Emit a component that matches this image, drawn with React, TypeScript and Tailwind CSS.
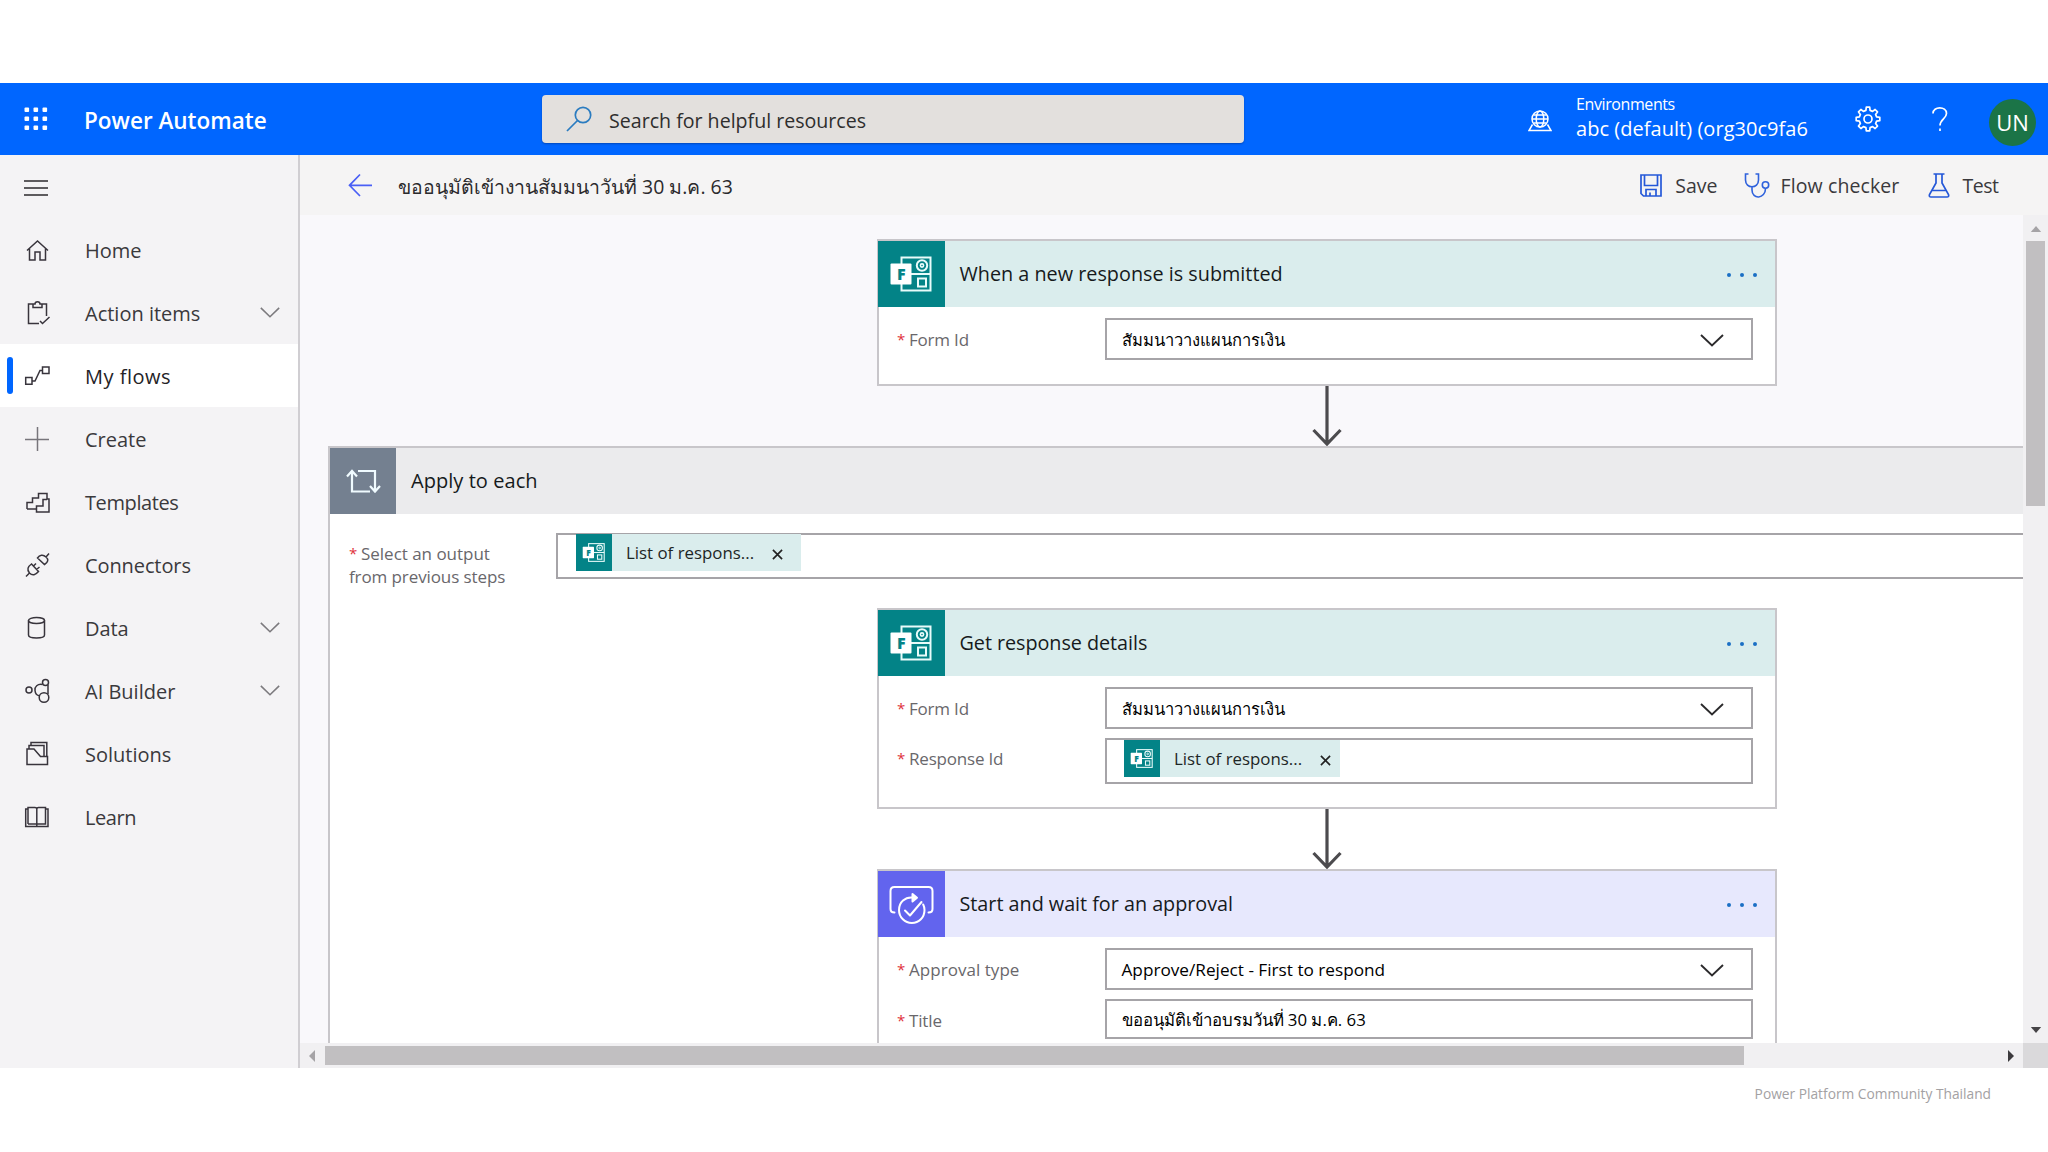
import React from "react";
import type { ReactNode } from "react";

const FONT = "font-['Open_Sans','Noto_Sans',sans-serif]";

type NavItem = { label: string; tracking: string; icon: ReactNode; expandable?: boolean; active?: boolean };

const NAV: NavItem[] = [
  {
    label: "Home",
    tracking: "tracking-normal",
    icon: <path d="M4 14.5 14.5 5 25 14.5M6.5 12.5V24H12V16H17V24H22.5V12.5" />,
  },
  {
    label: "Action items",
    tracking: "tracking-normal",
    expandable: true,
    icon: (
      <>
        <path d="M10 5H5.5V24.5H16M19 5H23.5V17M10 8.500H19V5H17C17 2 12 2 12 5H10Z" />
        <path d="M17 22 19.500 24.500 26.500 18" />
      </>
    ),
  },
  {
    label: "My flows",
    tracking: "tracking-[0.5px]",
    active: true,
    icon: <path d="M2.700 15.500H9V22.300H2.700ZM19.500 5H26V11.500H19.500ZM9 19H12L17 8.500H19.500" />,
  },
  { label: "Create", tracking: "tracking-normal", icon: <path d="M14.500 2V26M2 14.500H26" className="stroke-[#77757b]" /> },
  {
    label: "Templates",
    tracking: "tracking-[-0.4px]",
    icon: <path d="M4 21V14.500H9.500V10H15.500V5.500H24V11H26V24H13.500V18H20V11.500H24M4 21H13.500" />,
  },
  {
    label: "Connectors",
    tracking: "tracking-[-0.1px]",
    icon: (
      <>
        <path d="M3 25.500 6.500 22M6.500 22C3.500 18.500 5 15.500 8.500 13L15.500 20.500C12.500 24 9.500 25 6.500 22ZM10.500 15 13 12.500M13.500 18.500 16.500 16" />
        <path d="M26 2.500 23 6M23 6C20 3 16.500 4 14.500 7L21.500 13.500C25 11.500 26 8.500 23 6Z" />
      </>
    ),
  },
  {
    label: "Data",
    tracking: "tracking-[-0.1px]",
    expandable: true,
    icon: (
      <>
        <ellipse cx="13.500" cy="6.500" rx="8" ry="3" />
        <path d="M5.500 6.500V21C5.500 25 21.500 25 21.500 21V6.500" />
      </>
    ),
  },
  {
    label: "AI Builder",
    tracking: "tracking-normal",
    expandable: true,
    icon: (
      <>
        <circle cx="6" cy="13" r="3" />
        <circle cx="22.500" cy="5.500" r="3" />
        <circle cx="21" cy="20.500" r="4.800" />
        <path d="M19.500 7.500C14.500 6.500 11.500 10 12 13.500C12.300 17 14.500 18.500 16.500 18.800M25 8V17" />
      </>
    ),
  },
  {
    label: "Solutions",
    tracking: "tracking-normal",
    icon: <path d="M4 24.500V9H11L17.500 16.500H24.500V24.500ZM6 9V5.500H21V16M8 5.500V2.500H23.800V16.500" />,
  },
  {
    label: "Learn",
    tracking: "tracking-[-0.4px]",
    icon: <path d="M5 6H2.700V23.500H25V6H22.500M5 21V4.500H12C13 4.500 13.800 5 13.800 6C13.800 5 14.500 4.500 15.500 4.500H22.500V21H5M13.800 6V23.500" />,
  },
];

function Chevron({ className }: { className: string }) {
  return (
    <svg viewBox="0 0 24 13" className={className} fill="none" preserveAspectRatio="none">
      <path d="M1 1 12 11.500 23 1" stroke="currentColor" strokeWidth="1.900" />
    </svg>
  );
}

function Header() {
  return (
    <header className="flex h-[72px] shrink-0 items-center bg-[#0066ff] text-white">
      <svg viewBox="0 0 24 24" className="ml-6 h-6 w-6 shrink-0" fill="currentColor">
        {[0, 9, 18].map((y) => [0, 9, 18].map((x) => <rect key={`${x}-${y}`} x={x + 0.5} y={y + 0.5} width="4.600" height="4.600" rx="1" />))}
      </svg>
      <div className="ml-9 w-[458px] pt-[3px] text-[22.5px] leading-8 font-semibold">Power Automate</div>
      <div className="flex h-12 w-[702px] items-center rounded-[4px] bg-[#e3e0dd] shadow-[0_1px_2px_rgba(0,30,90,0.4)]">
        <svg viewBox="0 0 26 26" className="ml-6 h-[26px] w-[26px]" fill="none" stroke="#2b7cc0" strokeWidth="1.700">
          <circle cx="17" cy="9" r="7.700" />
          <path d="M11.500 14.500 1 25" />
        </svg>
        <span className="ml-[17px] pt-1 text-[19.600px] leading-7 whitespace-nowrap text-[#2f2e2d]">Search for helpful resources</span>
      </div>
      <svg viewBox="0 0 24 22" className="mt-1 ml-[284px] h-[22px] w-6 shrink-0" fill="none" stroke="white" strokeWidth="1.500">
        <circle cx="12" cy="9" r="8" />
        <ellipse cx="12" cy="9" rx="3.800" ry="8" />
        <path d="M4 9H20M5.500 5H18.500M5.500 13H18.500M4.500 14.500 1 20.500H23L19.500 14.500" />
      </svg>
      <div className="-mt-1 ml-6 w-[241px] whitespace-nowrap">
        <div className="text-[16px] leading-[22px] tracking-[-0.4px]">Environments</div>
        <div className="text-[20px] leading-[27px] tracking-[0.04px]">abc (default) (org30c9fa6</div>
      </div>
      <svg viewBox="0 0 26 26" className="ml-[38px] h-[26px] w-[26px]" fill="none" stroke="white" strokeWidth="1.700" strokeLinejoin="round">
        <path d="M10.900 4.400 11.300 1.200H14.700L15.100 4.400L17.600 5.400L20.100 3.500L22.500 5.900L20.600 8.400L21.600 10.900L24.800 11.300V14.700L21.600 15.100L20.600 17.600L22.500 20.100L20.100 22.500L17.600 20.600L15.100 21.600L14.700 24.800H11.300L10.900 21.600L8.400 20.600L5.900 22.500L3.500 20.100L5.400 17.600L4.400 15.100L1.200 14.700V11.300L4.400 10.900L5.400 8.400L3.500 5.900L5.900 3.500L8.400 5.400Z" />
        <circle cx="13" cy="13" r="4" />
      </svg>
      <svg viewBox="0 0 16 25" className="ml-[51px] h-[25px] w-4" fill="none" stroke="white" strokeWidth="1.700">
        <path d="M1 6.500C1 -1 14.500 -1 14.500 6.500C14.500 11.500 8 12.500 8 18.500M8 21.500V24" />
      </svg>
      <div className="mt-[6px] ml-[41px] flex h-[47px] w-[47px] items-center justify-center rounded-full bg-[#1b7447] pt-px text-[22px]">UN</div>
    </header>
  );
}

function Sidebar() {
  return (
    <nav className="flex w-[300px] shrink-0 flex-col border-r-2 border-[#d0ced2] bg-[#f4f3f5]">
      <div className="flex h-[63px] items-center pl-6">
        <svg viewBox="0 0 24 16" className="mt-0.5 h-4 w-6" stroke="#2b2a2c" strokeWidth="1.600">
          <path d="M0 1H24M0 8H24M0 15H24" />
        </svg>
      </div>
      {NAV.map((n) => (
        <div key={n.label} className={n.active ? "flex h-[63px] items-center bg-white" : "flex h-[63px] items-center"}>
          <div className={n.active ? "ml-[7px] h-[37px] w-[6px] rounded-full bg-[#0066ff]" : "ml-[7px] h-[37px] w-[6px]"} />
          <svg viewBox="0 0 28 27" className="ml-[10px] h-[27px] w-7 overflow-visible" fill="none" stroke="#38343c" strokeWidth="1.500">
            {n.icon}
          </svg>
          <span className={`ml-[34px] flex-1 pt-0.5 text-[20px] leading-7 ${n.tracking} ${n.active ? "text-[#242326]" : "text-[#3a393c]"}`}>{n.label}</span>
          {n.expandable && <Chevron className="mr-[18px] h-[11px] w-5 text-[#7c7a7e]" />}
        </div>
      ))}
    </nav>
  );
}

function CommandBar() {
  return (
    <div className="flex h-[60px] shrink-0 items-center bg-[#f5f4f4] text-[19.500px] whitespace-nowrap text-[#3a393c]">
      <svg viewBox="0 0 24 24" className="ml-12 h-6 w-6" fill="none" stroke="#4a5ff5" strokeWidth="1.700">
        <path d="M12 1.500 1.500 12.300 12 23M1.500 12.300H24" />
      </svg>
      <span className="ml-[26px] pt-1 text-[19.450px] text-[#2c2b2d]">ขออนุมัติเข้างานสัมมนาวันที่ 30 ม.ค. 63</span>
      <svg viewBox="0 0 22 23" className="ml-auto h-[23px] w-[22px]" fill="none" stroke="#2558d8" strokeWidth="1.700">
        <path d="M1 1H21V22H3.500L1 19.500ZM4.500 1V11.500H17.500V1M6 22V15.500H16V22M10 22V18.500" />
      </svg>
      <span className="ml-[13px] pt-px">Save</span>
      <svg viewBox="0 0 26 25" className="ml-[26px] h-[25px] w-[26px]" fill="none" stroke="#2f62dc" strokeWidth="1.600">
        <path d="M4.500 1H1.500V7C1.500 16 14.500 16 14.500 7V1H11.500M8 13.700V17C8 27 21.500 26 21.500 15.500" />
        <circle cx="21.500" cy="12" r="3.200" />
      </svg>
      <span className="ml-[11px] w-[118px] pt-px tracking-[0.1px]">Flow checker</span>
      <svg viewBox="0 0 22 25" className="ml-[29px] h-[25px] w-[22px]" fill="none" stroke="#2558d8" strokeWidth="1.700">
        <path d="M5.500 1H16.500M8 1V10L1.500 21.500C1 23 1.500 24 3 24H19C20.500 24 21 23 20.500 21.500L14 10V1M4 17.500H18" />
      </svg>
      <span className="mr-[49.500px] ml-[13px] pt-px tracking-[-0.5px]">Test</span>
    </div>
  );
}

function FormsGlyph({ className }: { className: string }) {
  return (
    <svg viewBox="0 0 67 66" className={className} fill="none" stroke="#e8fbfa" strokeWidth="2">
      <rect x="23.500" y="16.500" width="29" height="33" />
      <path d="M32 33H52.500" />
      <circle cx="44" cy="24.500" r="5.200" />
      <circle cx="44" cy="24.500" r="1.600" strokeWidth="1.600" />
      <rect x="40" y="37.500" width="8" height="8" />
      <rect x="12.500" y="22.500" width="21" height="21" rx="1" fill="white" stroke="none" />
      <text x="23.200" y="39" textAnchor="middle" fontSize="16" fontWeight="800" fontFamily="Open Sans, sans-serif" fill="#038387" stroke="none">
        F
      </text>
    </svg>
  );
}

function ApprovalGlyph({ className }: { className: string }) {
  return (
    <svg viewBox="0 0 67 66" className={className} fill="none" stroke="white" strokeWidth="2" strokeLinecap="round" strokeLinejoin="round">
      <path d="M16.500 41.500C13.500 41.500 12.500 40.500 12.500 38V20C12.500 17.500 14 16 16.500 16H50.500C53 16 54.500 17.500 54.500 20V38C54.500 40.500 53.500 41.500 50.500 41.500" />
      <path d="M35 26.500C27 25.500 21 31.500 21 39C21 46.500 27 52 33.800 52C41 52 46.500 46.500 46.500 39C46.500 37 46 35 45.200 33.500" />
      <path d="M34.500 23 39 26.700 34.500 30.500Z" fill="white" />
      <path d="M27 39.500 32 44.500 43.500 31" />
    </svg>
  );
}

function Label({ children, tracking = "tracking-[-0.15px]" }: { children: ReactNode; tracking?: string }) {
  return (
    <div className={`flex text-[17px] leading-[23px] whitespace-nowrap text-[#69676b] ${tracking}`}>
      <span className="-ml-px w-2 text-[15px] text-[#e0303a]">*</span>
      <span className="ml-1">{children}</span>
    </div>
  );
}

function Field({ label, labelTracking, labelPad = "", className, children }: { label: string; labelTracking?: string; labelPad?: string; className: string; children: ReactNode }) {
  return (
    <div className={`flex items-stretch pr-[22px] pl-[19px] ${className}`}>
      <div className={`flex w-[207px] shrink-0 items-center ${labelPad}`}>
        <Label tracking={labelTracking}>{label}</Label>
      </div>
      <div className="flex flex-1 items-center border-2 border-[#a6a4a8] bg-white text-[17.200px] whitespace-nowrap text-black">{children}</div>
    </div>
  );
}

function Token({ tail }: { tail: string }) {
  return (
    <div className="flex h-[37px] items-center self-start bg-[#daeded]">
      <div className="h-[37px] w-9 bg-[#038387]">
        <FormsGlyph className="h-[37px] w-9" />
      </div>
      <span className="ml-[14px] w-[129px] pt-px text-[16.850px] whitespace-nowrap text-[#1d2626]">List of respons...</span>
      <svg viewBox="0 0 12 12" className="mt-1 ml-[17px] h-[11px] w-[11px]" stroke="#222" strokeWidth="1.800">
        <path d="M1 1 11 11M11 1 1 11" />
      </svg>
      <div className={tail} />
    </div>
  );
}

function Select({ value, thai }: { value: string; thai?: boolean }) {
  return (
    <>
      <span className={thai ? "ml-[14.500px] pt-0.5 text-[16.550px] font-medium" : "ml-[14.500px] pt-px"}>{value}</span>
      <Chevron className="mt-0.5 mr-[27px] ml-auto h-[13px] w-6 text-[#2b2a2c]" />
    </>
  );
}

function Card({ title, titleClass, tile, head, icon, height, children }: { title: string; titleClass: string; tile: string; head: string; icon: ReactNode; height: string; children: ReactNode }) {
  return (
    <section className={`flex w-[900px] shrink-0 flex-col border-2 border-[#c8c6ca] bg-white ${height}`}>
      <div className={`flex h-[66px] shrink-0 items-center ${head}`}>
        <div className={`-ml-px h-[66px] w-[67px] ${tile}`}>{icon}</div>
        <h2 className={`ml-[14.500px] text-[19.800px] text-[#161a1c] ${titleClass}`}>{title}</h2>
        <div className="mt-0.5 mr-[18px] ml-auto flex gap-[9px]">
          <span className="h-1 w-1 rounded-full bg-[#1b6fc4]" />
          <span className="h-1 w-1 rounded-full bg-[#1b6fc4]" />
          <span className="h-1 w-1 rounded-full bg-[#1b6fc4]" />
        </div>
      </div>
      {children}
    </section>
  );
}

function Arrow() {
  return (
    <svg viewBox="0 0 30 60" className="h-[60px] w-[30px] shrink-0" fill="none" stroke="#4c4b4e" strokeWidth="3.200">
      <path d="M15 0V57M1.500 44 15 58 28.500 44" />
    </svg>
  );
}

function Canvas() {
  return (
    <div className="h-[828px] w-[1723px] overflow-hidden bg-[#f9f8fb] pt-[24px]">
      <div className="ml-[577px] flex w-[900px] flex-col items-center">
        <Card
          title="When a new response is submitted"
          titleClass="tracking-[0.01px]"
          tile="bg-[#038387]"
          head="bg-[#daeded]"
          icon={<FormsGlyph className="h-[66px] w-[67px]" />}
          height="h-[147px]"
        >
          <Field label="Form Id" labelTracking="tracking-[-0.2px]" className="mt-[11px] h-[42px]">
            <Select value="สัมมนาวางแผนการเงิน" thai />
          </Field>
        </Card>
        <Arrow />
      </div>
      <section className="ml-7 flex h-[700px] w-[1800px] flex-col border-2 border-[#c8c6ca] bg-white">
        <div className="flex h-[66px] shrink-0 items-center bg-[#ebebed]">
          <svg viewBox="0 0 66 66" className="h-[66px] w-[66px] bg-[#748090]" fill="none" stroke="#f0fbff" strokeWidth="2.200">
            <path d="M22 24V43.500H40M17 28.500 22 23 27 28.500M28 23H45V43M40 38 45 43.500 50 38" />
          </svg>
          <h2 className="ml-[15px] text-[20px] tracking-[0.05px] text-[#161a1c]">Apply to each</h2>
        </div>
        <div className="flex h-[73px] items-start pt-[19px] pl-[20px]">
          <div className="w-[206px] pt-[9px]">
            <Label tracking="tracking-[-0.02px]">Select an output</Label>
            <div className="-ml-px text-[17px] leading-[23px] tracking-[-0.1px] text-[#69676b]">from previous steps</div>
          </div>
          <div className="flex h-[46px] flex-1 items-start border-2 border-[#a6a4a8] pl-[18px]">
            <div className="-mt-px flex">
              <Token tail="w-[18px]" />
            </div>
          </div>
        </div>
        <div className="mt-[21px] ml-[547px] flex w-[900px] flex-col items-center">
          <Card
            title="Get response details"
            titleClass="tracking-[-0.05px]"
            tile="bg-[#038387]"
            head="bg-[#daeded]"
            icon={<FormsGlyph className="h-[66px] w-[67px]" />}
            height="h-[201px]"
          >
            <Field label="Form Id" labelTracking="tracking-[-0.2px]" className="mt-[11px] h-[42px]">
              <Select value="สัมมนาวางแผนการเงิน" thai />
            </Field>
            <Field label="Response Id" labelTracking="tracking-[-0.2px]" labelPad="pb-[5px]" className="mt-[9px] h-[46px]">
              <div className="flex self-start pl-[17px]">
                <Token tail="w-[9px]" />
              </div>
            </Field>
          </Card>
          <Arrow />
          <Card
            title="Start and wait for an approval"
            titleClass="tracking-[-0.02px]"
            tile="bg-[#6264ee]"
            head="bg-[#e7e8fd]"
            icon={<ApprovalGlyph className="h-[66px] w-[67px]" />}
            height="h-[300px]"
          >
            <Field label="Approval type" labelTracking="tracking-[0.04px]" className="mt-[11px] h-[42px]">
              <Select value="Approve/Reject - First to respond" />
            </Field>
            <Field label="Title" labelPad="pt-0.5" className="mt-[9px] h-[40px]">
              <span className="ml-[14.500px] pt-0.5 text-[16.800px] font-medium">ขออนุมัติเข้าอบรมวันที่ 30 ม.ค. 63</span>
            </Field>
          </Card>
        </div>
      </section>
    </div>
  );
}

function VerticalScrollbar() {
  return (
    <div className="flex h-[828px] w-[25px] flex-col items-center bg-[#f1f0f2]">
      <svg viewBox="0 0 12 7" className="mt-[11px] h-[6px] w-3" fill="#a5a3a6">
        <path d="M0 7 6 0 12 7Z" />
      </svg>
      <div className="mt-[9px] h-[265px] w-[19px] bg-[#c1bfc1]" />
      <svg viewBox="0 0 12 7" className="mt-auto mb-[10px] h-[6px] w-3" fill="#454346">
        <path d="M0 0 6 7 12 0Z" />
      </svg>
    </div>
  );
}

function HorizontalScrollbar() {
  return (
    <div className="flex h-[25px] w-[1723px] items-center bg-[#f1f0f2]">
      <svg viewBox="0 0 6 12" className="ml-[9px] h-3 w-1.5" fill="#a5a3a6">
        <path d="M6 0 0 6 6 12Z" />
      </svg>
      <div className="ml-[10px] h-[19px] w-[1419px] bg-[#c1bfc1]" />
      <svg viewBox="0 0 6 12" className="mr-[9px] ml-auto h-3 w-1.5" fill="#3c3a3d">
        <path d="M0 0 6 6 0 12Z" />
      </svg>
    </div>
  );
}

export default function App() {
  return (
    <div className={`flex h-[1152px] w-[2048px] flex-col overflow-hidden bg-white pt-[83px] ${FONT}`}>
      <Header />
      <div className="flex h-[913px] shrink-0">
        <Sidebar />
        <main className="flex w-[1748px] flex-col">
          <CommandBar />
          <div className="flex">
            <Canvas />
            <VerticalScrollbar />
          </div>
          <div className="flex">
            <HorizontalScrollbar />
            <div className="h-[25px] w-[25px] bg-[#dad9db]" />
          </div>
        </main>
      </div>
      <footer className="mt-[14px] mr-[57px] text-right text-[13.750px] leading-6 text-[#a3a1a3]">Power Platform Community Thailand</footer>
    </div>
  );
}
